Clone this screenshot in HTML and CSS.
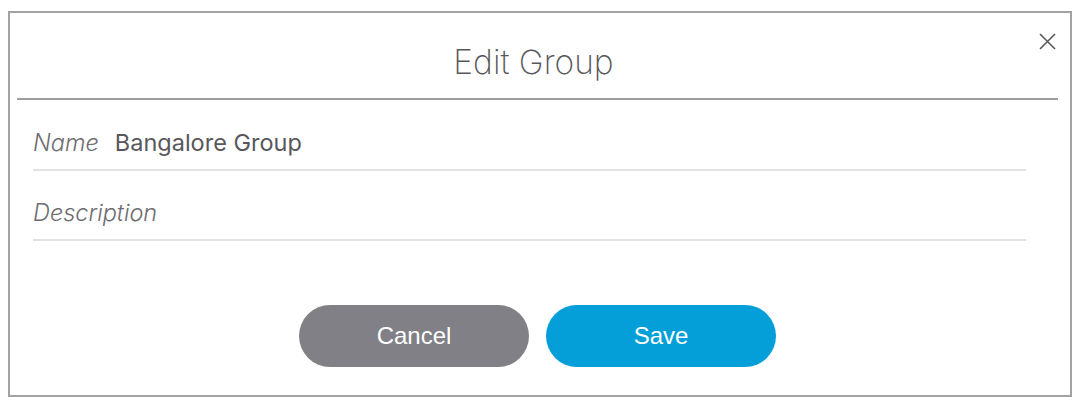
FILE: index.html
```html
<!DOCTYPE html>
<html>
<head>
<meta charset="utf-8">
<link rel="stylesheet" href="styles.css">
</head>
<body>
<div class="dialog">
  <button class="close" aria-label="Close">
    <svg width="17" height="17" viewBox="0 0 17 17"><path d="M1 1 L16 16 M16 1 L1 16" stroke="#58585b" stroke-width="1.6" fill="none"/></svg>
  </button>
  <div class="header">
    <h1 class="title">Edit Group</h1>
  </div>
  <div class="fields">
    <div class="field">
      <span class="label">Name</span>
      <span class="value">Bangalore Group</span>
    </div>
    <div class="field">
      <span class="label">Description</span>
    </div>
  </div>
  <div class="actions">
    <button class="btn btn-cancel">Cancel</button>
    <button class="btn btn-save">Save</button>
  </div>
</div>
</body>
</html>
```
FILE: styles.css
```css
html, body {
  margin: 0;
  padding: 0;
  background: #ffffff;
}
body {
  padding: 11px 14px 15px 8px;
  font-family: Inter, "Liberation Sans", sans-serif;
}
.dialog {
  position: relative;
  border: 2px solid #a3a3a3;
  height: 382px;
  box-sizing: content-box;
}
.close {
  position: absolute;
  top: 20px;
  right: 14px;
  width: 17px;
  height: 17px;
  padding: 0;
  border: 0;
  background: transparent;
  display: flex;
}
.header {
  margin: 0 12px 0 7px;
  padding: 29px 0 16px;
  border-bottom: 2px solid #9d9d9d;
  text-align: center;
}
.title {
  margin: 0 0 0 -8px;
  font-size: 33.5px;
  line-height: 40px;
  font-weight: 200;
  color: #58585b;
}
.fields {
  margin: 0 44px 0 23px;
  padding-top: 1px;
}
.field {
  display: flex;
  gap: 16px;
  padding: 27px 0 11px;
  font-size: 23.5px;
  line-height: 30px;
  border-bottom: 2px solid #e2e2e2;
}
.label {
  font-style: italic;
  font-weight: 300;
  color: #6d6d70;
}
.value {
  font-weight: 400;
  color: #58585b;
}
.actions {
  display: flex;
  justify-content: center;
  gap: 17px;
  margin-top: 64px;
  padding-right: 5px;
}
.btn {
  width: 230px;
  height: 62px;
  border: 0;
  border-radius: 31px;
  font-family: "Liberation Sans", Arial, sans-serif;
  font-size: 24px;
  color: #ffffff;
}
.btn-cancel {
  background: #808086;
}
.btn-save {
  background: #049fd9;
}
```
